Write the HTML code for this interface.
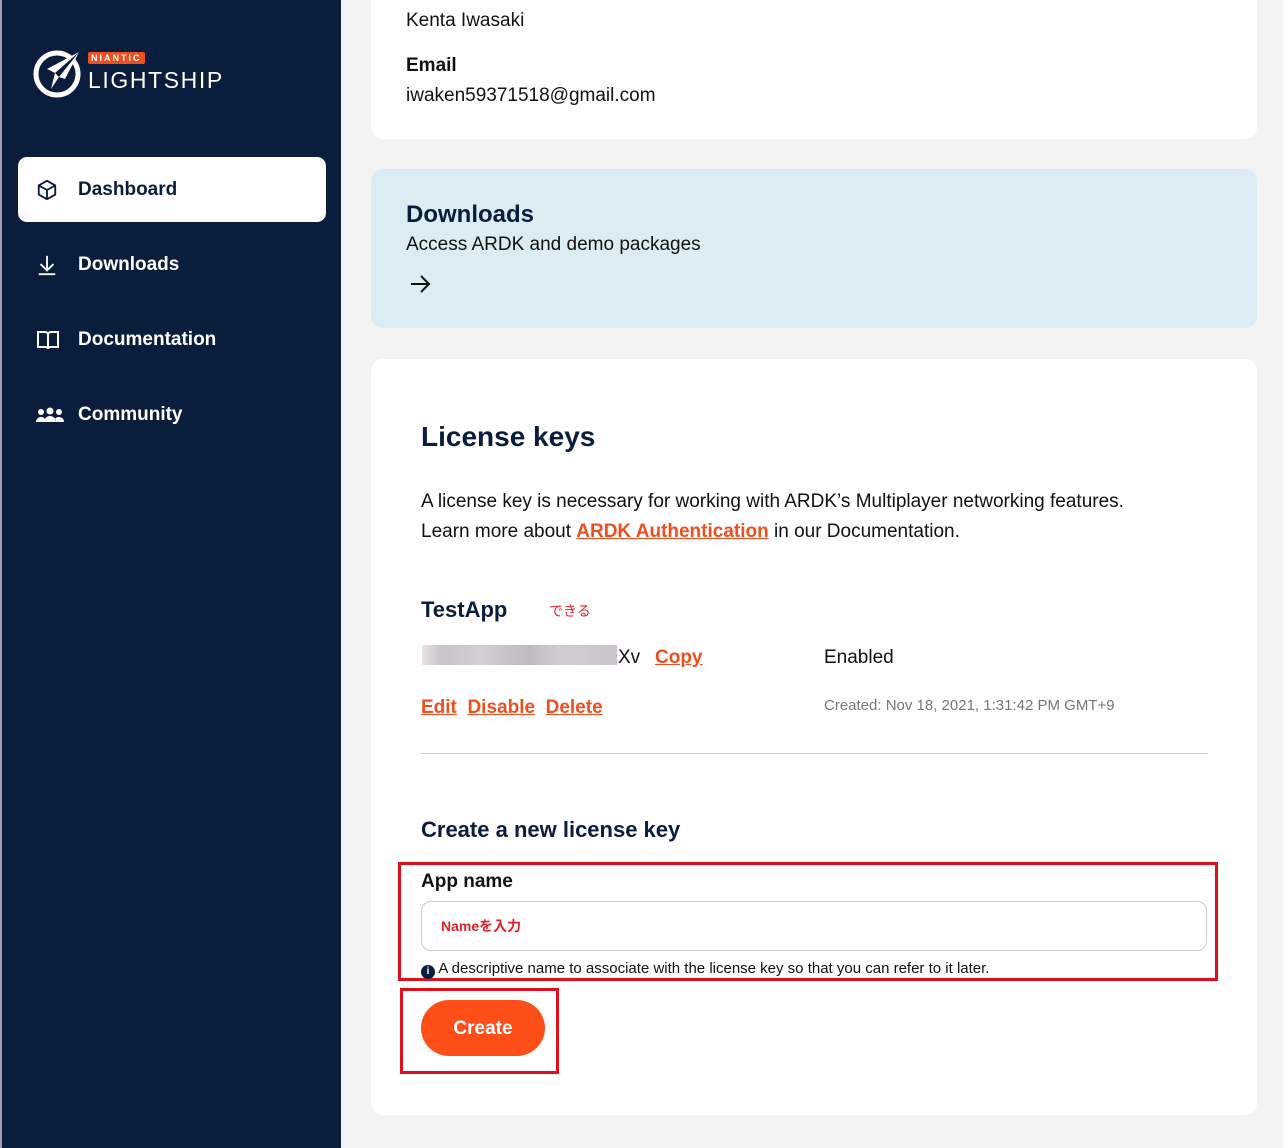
<!DOCTYPE html>
<html><head><meta charset="utf-8"><style>
*{box-sizing:border-box;margin:0;padding:0}
body{width:1283px;height:1148px;overflow:hidden;background:#f3f3f3;font-family:"Liberation Sans","Noto Sans CJK JP",sans-serif;color:#111;position:relative}
.side{position:absolute;left:0;top:0;width:341px;height:1148px;background:#0b1d3c;border-left:2px solid #9aa3ad}
.abs{position:absolute}
.nav{position:absolute;left:16px;width:308px;height:65px;border-radius:9px;color:#fff;font-weight:bold;font-size:19px;display:flex;align-items:center;padding-left:60px}
.nav svg{position:absolute;left:18px;top:50%;transform:translateY(-50%)}
.card{position:absolute;left:371px;width:886px;background:#fff;border-radius:12px}
.o{color:#f04e1e;text-decoration:underline;font-weight:bold}
</style></head><body>
<div class="side">
  <svg class="abs" style="left:31px;top:49px" width="50" height="50" viewBox="0 0 50 50"><circle cx="24" cy="25" r="21" fill="none" stroke="#fff" stroke-width="5"/><path d="M46 3 L14 20 L22 24 L18 40 L26 28 L32 30 Z" fill="#fff"/><path d="M46 3 L22 24 L26 28Z" fill="#0b1d3c"/></svg>
  <div class="abs" style="left:86px;top:52px;background:#f04e1e;color:#fff;font-size:9px;font-weight:bold;letter-spacing:2px;padding:1px 3px;border-radius:2px">NIANTIC</div>
  <div class="abs" style="left:86px;top:67px;color:#fff;font-size:23px;letter-spacing:1.6px">LIGHTSHIP</div>
  <div class="nav" style="top:157px;background:#fff;color:#0b1d3c"><svg width="22" height="22" viewBox="0 0 24 24" fill="none" stroke="#0b1d3c" stroke-width="2"><path d="M12 2l9 5v10l-9 5-9-5V7z M3 7l9 5 9-5 M12 12v10"/></svg>Dashboard</div>
  <div class="nav" style="top:232px"><svg width="22" height="22" viewBox="0 0 24 24" fill="none" stroke="#fff" stroke-width="2"><path d="M12 2v15 M5 11l7 7 7-7 M3 22h18"/></svg>Downloads</div>
  <div class="nav" style="top:307px"><svg width="24" height="22" viewBox="0 0 24 22" fill="none" stroke="#fff" stroke-width="2"><path d="M2 3h7a3 3 0 0 1 3 3v14a2 2 0 0 0-2-2H2z M22 3h-7a3 3 0 0 0-3 3v14a2 2 0 0 1 2-2h8z"/></svg>Documentation</div>
  <div class="nav" style="top:382px"><svg width="28" height="18" viewBox="0 0 28 18" fill="#fff"><circle cx="14" cy="5" r="3.5"/><circle cx="5" cy="6" r="3"/><circle cx="23" cy="6" r="3"/><path d="M8 16a6 6 0 0 1 12 0z M0 16a5 5 0 0 1 9-3l-1 3z M28 16a5 5 0 0 0-9-3l1 3z"/></svg>Community</div>
</div>

<div class="card" style="top:-20px;height:159px">
  <div class="abs" style="left:35px;top:30px;font-size:19px">Kenta Iwasaki</div>
  <div class="abs" style="left:35px;top:75px;font-size:19px;font-weight:bold">Email</div>
  <div class="abs" style="left:35px;top:105px;font-size:19px">iwaken59371518@gmail.com</div>
</div>
<div class="card" style="top:169px;height:159px;background:#dbedf2">
  <div class="abs" style="left:35px;top:32px;font-size:24px;font-weight:bold;color:#0b1d3c">Downloads</div>
  <div class="abs" style="left:35px;top:65px;font-size:19px">Access ARDK and demo packages</div>
  <svg class="abs" style="left:38px;top:104px" width="22" height="22" viewBox="0 0 22 22" fill="none" stroke="#111" stroke-width="2"><path d="M2 11h18 M12 3l8 8-8 8"/></svg>
</div>
<div class="card" style="top:359px;height:756px">
  <div class="abs" style="left:50px;top:62px;font-size:28px;font-weight:bold;color:#0b1d3c">License keys</div>
  <div class="abs" style="left:50px;top:128px;font-size:19px;line-height:30px">A license key is necessary for working with ARDK’s Multiplayer networking features.<br>Learn more about <span class="o">ARDK Authentication</span> in our Documentation.</div>
  <div class="abs" style="left:50px;top:238px;font-size:22px;font-weight:bold;color:#0b1d3c">TestApp</div>
  <div class="abs" style="left:178px;top:242px;font-size:14px;color:#e0202a">できる</div>
  <div class="abs" style="left:51px;top:286px;width:195px;height:20px;background:linear-gradient(90deg,#e8e4e8 0,#c9c3c9 10%,#d4cfd4 30%,#c0bac0 55%,#d2cdd2 70%,#cbc5cb 100%)"></div>
  <div class="abs" style="left:247px;top:288px;font-size:19px">Xv</div>
  <div class="abs o" style="left:284px;top:288px;font-size:19px">Copy</div>
  <div class="abs" style="left:453px;top:288px;font-size:19px">Enabled</div>
  <div class="abs" style="left:50px;top:338px;font-size:19px"><span class="o">Edit</span>&nbsp; <span class="o">Disable</span>&nbsp; <span class="o">Delete</span></div>
  <div class="abs" style="left:453px;top:338px;font-size:15px;color:#777">Created: Nov 18, 2021, 1:31:42 PM GMT+9</div>
  <div class="abs" style="left:50px;top:394px;width:787px;height:1px;background:#ccc"></div>
  <div class="abs" style="left:50px;top:458px;font-size:22px;font-weight:bold;color:#0b1d3c">Create a new license key</div>
  <div class="abs" style="left:27px;top:503px;width:820px;height:119px;border:3px solid #e0101a"></div>
  <div class="abs" style="left:50px;top:512px;font-size:19px;font-weight:bold">App name</div>
  <div class="abs" style="left:50px;top:542px;width:786px;height:50px;border:1px solid #ccc;border-radius:10px"></div>
  <div class="abs" style="left:70px;top:557px;font-size:14px;font-weight:bold;color:#e0202a">Nameを入力</div>
  <div class="abs" style="left:50px;top:601px;font-size:15px"><span style="display:inline-block;width:14px;height:14px;border-radius:50%;background:#0b1d3c;color:#fff;font-size:10px;text-align:center;line-height:14px;font-weight:bold;vertical-align:-1px">i</span> A descriptive name to associate with the license key so that you can refer to it later.</div>
  <div class="abs" style="left:29px;top:629px;width:159px;height:86px;border:3px solid #e0101a"></div>
  <div class="abs" style="left:50px;top:641px;width:124px;height:56px;border-radius:28px;background:#fd4f17;color:#fff;font-weight:bold;font-size:19px;text-align:center;line-height:58px">Create</div>
</div>
</body></html>
